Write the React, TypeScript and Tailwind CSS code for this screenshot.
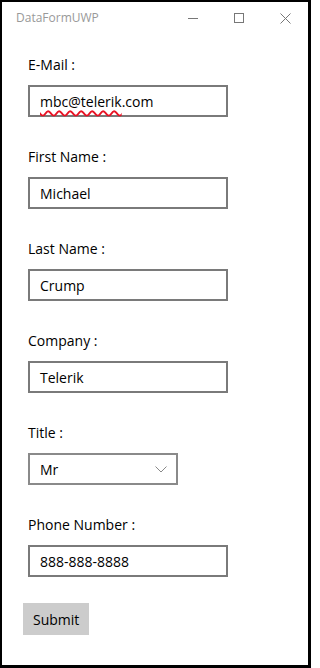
const fields = [
  { label: 'E-Mail :', value: 'mbc@telerik.com', spell: true },
  { label: 'First Name :', value: 'Michael' },
  { label: 'Last Name :', value: 'Crump' },
  { label: 'Company :', value: 'Telerik' },
]

function TextBox({ value, spell }: { value: string; spell?: boolean }) {
  return (
    <div className="flex h-[32px] w-[200px] items-center border-2 border-[#7a7a7a] bg-white pl-[10px] text-[14px] text-black">
      {spell ? (
        <span>
          <span className="underline decoration-[#e81123] decoration-wavy decoration-[1.5px] underline-offset-[3px]">
            mbc@telerik
          </span>
          .com
        </span>
      ) : (
        value
      )}
    </div>
  )
}

function Field({ label, children }: { label: string; children: React.ReactNode }) {
  return (
    <div className="flex flex-col pl-[5px]">
      <div className="h-[20px] text-[14px] leading-[20px] text-black">{label}</div>
      <div className="mt-[10px]">{children}</div>
    </div>
  )
}

export default function App() {
  return (
    <div
      className="flex h-[668px] w-[311px] flex-col border-t-2 border-r-[3px] border-b-[3px] border-l-2 border-black bg-white"
      style={{ fontFamily: '"Open Sans", "Noto Sans", sans-serif' }}
    >
      <div className="flex h-[32px] shrink-0 items-center">
        <div className="flex-1 pl-[14px] text-[12px] text-[#999999]">DataFormUWP</div>
        <div className="flex h-full w-[46px] items-center justify-center">
          <svg width="10" height="10" viewBox="0 0 10 10">
            <line x1="0" y1="5.5" x2="10" y2="5.5" stroke="#777" strokeWidth="1" />
          </svg>
        </div>
        <div className="flex h-full w-[46px] items-center justify-center">
          <svg width="10" height="10" viewBox="0 0 10 10">
            <rect x="0.5" y="0.5" width="9" height="9" fill="none" stroke="#777" strokeWidth="1" />
          </svg>
        </div>
        <div className="flex h-full w-[46px] items-center justify-center">
          <svg width="11" height="11" viewBox="0 0 11 11">
            <path d="M0.5 0.5L10.5 10.5M10.5 0.5L0.5 10.5" stroke="#777" strokeWidth="1" />
          </svg>
        </div>
      </div>

      <div className="flex flex-col gap-[30px] pl-[21px] pt-[21px]">
        {fields.map((f) => (
          <Field key={f.label} label={f.label}>
            <TextBox value={f.value} spell={f.spell} />
          </Field>
        ))}
        <Field label="Title :">
          <div className="flex h-[32px] w-[150px] items-center justify-between border-2 border-[#8a8a8a] pl-[10px] pr-[9px] text-[14px] text-black">
            <span>Mr</span>
            <svg width="12" height="7" viewBox="0 0 12 7">
              <path d="M0.5 0.5L6 6L11.5 0.5" fill="none" stroke="#888" strokeWidth="1" />
            </svg>
          </div>
        </Field>
        <Field label="Phone Number :">
          <TextBox value="888-888-8888" />
        </Field>
      </div>

      <div className="pl-[21px] pt-[26px]">
        <button className="h-[32px] bg-[#cccccc] px-[10px] text-[14px] text-black">Submit</button>
      </div>
    </div>
  )
}
